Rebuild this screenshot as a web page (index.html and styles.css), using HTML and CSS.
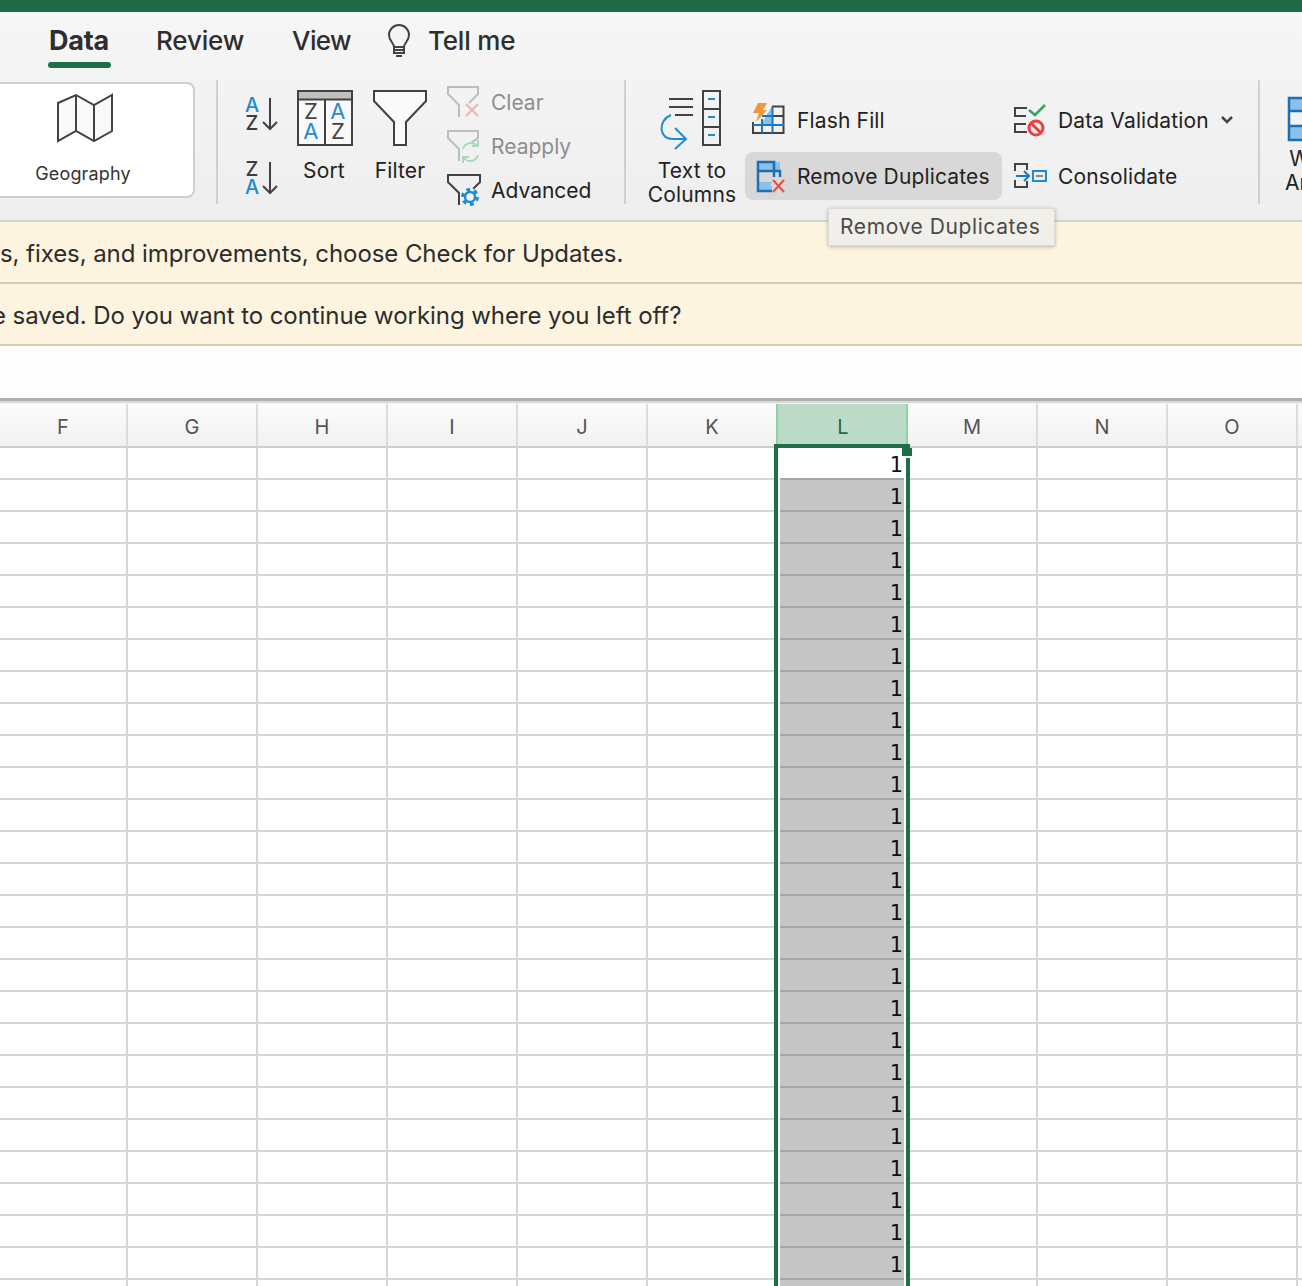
FILE: index.html
```html
<!DOCTYPE html>
<html lang="en">
<head>
  <meta charset="UTF-8">
  <title>Remove Duplicates</title>
  <link rel="stylesheet" href="styles.css">
</head>
<body>
<div class="titlebar"></div>
<div class="ribbon">
  <div class="tabs">
    <a class="tab tab-data active">Data</a>
    <a class="tab tab-review">Review</a>
    <a class="tab tab-view">View</a>
    <svg class="bulb" width="24" height="32" viewBox="0 0 24 32"><path class="dark-line" d="M7 23c0-4-5-6-5-12a10 10 0 0 1 20 0c0 6-5 8-5 12z"/><path class="dark-line" d="M7 23v6h10v-6M7 26h10M9 32h6"/></svg>
    <a class="tab tab-tell">Tell me</a>
  </div>
  <div class="tools">
    <div class="geo-card">
      <svg width="56" height="48" viewBox="0 0 56 48"><path class="dark-line fill-soft" d="M1 9 19 1 37 11 55 1V37L37 47 19 37 1 47ZM19 1V37M37 11V47"/></svg>
      <span>Geography</span>
    </div>
    <div class="sep sep-a"></div>
    <div class="sort-pair">
      <svg width="34" height="36" viewBox="0 0 34 36"><text class="blue-txt" x="0" y="15">A</text><text class="dark-txt" x="0.500" y="33">Z</text><path class="dark-line" d="M25 1V32M18 25l7 7 7-7"/></svg>
      <svg width="34" height="36" viewBox="0 0 34 36"><text class="dark-txt" x="0.500" y="15">Z</text><text class="blue-txt" x="0" y="33">A</text><path class="dark-line" d="M25 1V32M18 25l7 7 7-7"/></svg>
    </div>
    <div class="big big-sort">
      <svg width="56" height="56" viewBox="0 0 56 56">
        <rect class="dark-line fill-soft" x="1" y="1" width="54" height="54"/>
        <rect x="2" y="2" width="52" height="7" fill="#bfbfbb"/>
        <path class="dark-line" d="M1 9.500H55M28 9V55"/>
        <text class="big-letter" x="14" y="29">Z</text><text class="big-letter blue" x="14" y="49">A</text>
        <text class="big-letter blue" x="41" y="29">A</text><text class="big-letter" x="41" y="49">Z</text>
      </svg>
      <span>Sort</span>
    </div>
    <div class="big big-filter">
      <svg width="56" height="56" viewBox="0 0 56 56"><path class="dark-line fill-soft" d="M2 1H54V11L34 32V55H22V32L2 11Z"/></svg>
      <span>Filter</span>
    </div>
    <div class="filter-list">
      <div class="filter-row off">
        <svg width="34" height="34" viewBox="0 0 34 34"><path class="grey-line" d="M12 32V20L1 9V2H31V9L22 18"/><path class="x-soft" d="M19 19 31 31M31 19 19 31"/></svg>
        <span>Clear</span>
      </div>
      <div class="filter-row off">
        <svg width="34" height="34" viewBox="0 0 34 34"><path class="grey-line" d="M12 32V20L1 9V2H31V9L24 14"/><path class="green-soft" d="M16 20a8 8 0 0 1 14-3M31 26a8 8 0 0 1-14 3"/><path class="green-soft" d="M31 11v6h-6M16 34v-6h6"/></svg>
        <span>Reapply</span>
      </div>
      <div class="filter-row">
        <svg width="34" height="34" viewBox="0 0 34 34"><path class="dark-line" d="M12 32V20L1 9V2H33V9L26 16"/><circle cx="23" cy="24" r="9" fill="#f4f4f4"/><circle class="gear-teeth" cx="23" cy="24" r="7.500"/><circle class="gear-ring" cx="23" cy="24" r="5"/></svg>
        <span>Advanced</span>
      </div>
    </div>
    <div class="sep sep-b"></div>
    <div class="big big-text">
      <svg width="62" height="60" viewBox="0 0 62 60">
        <path class="dark-line" d="M9 9H33M9 17H33M15 25H33"/>
        <rect class="dark-line" x="43" y="1" width="17" height="54"/>
        <path class="dark-line" d="M43 19H60M43 37H60"/>
        <path class="blue-dash" d="M48 9h7M48 27h7M48 45h7"/>
        <path class="blue-line" d="M11 25C-2 30 -2 49 13 49H26M15 38 26 49 15 59"/>
      </svg>
      <span>Text to<br>Columns</span>
    </div>
    <div class="commands">
      <div class="cmd cmd-wide">
        <svg width="34" height="34" viewBox="0 0 34 34">
          <path d="M10 20 20 3V22H10Z" fill="#8cc0ec"/>
          <path class="dark-line" d="M20 3.500H31.500V30H1V19M20 13H32"/>
          <path class="blue-bar" d="M10 16V30M20.500 4V30M1 22H32M10 13H20"/>
          <path d="M6 0H15L11 7H15L4 19 7 10H1Z" fill="#f0973a"/>
        </svg>
        <span>Flash Fill</span>
      </div>
      <div class="cmd">
        <svg width="34" height="34" viewBox="0 0 34 34"><path class="dark-line" d="M14 5H2V13H13M13 21H2V29H14"/><path class="green-check" d="M16 7 22 12 32 2"/><circle class="red-ring" cx="23" cy="25" r="7"/><path class="red-ring" d="M18 20 28 30"/></svg>
        <span>Data Validation</span>
        <svg class="chev" width="14" height="10" viewBox="0 0 14 10"><path d="M2 2 7 7 12 2" fill="none" stroke="#444" stroke-width="2.500"/></svg>
      </div>
      <div class="cmd cmd-wide hovered">
        <svg width="34" height="34" viewBox="0 0 34 34">
          <rect x="6" y="3" width="22" height="9" fill="#8cc0ec"/>
          <rect x="6" y="23" width="14" height="9" fill="#8cc0ec"/>
          <path class="frame-blue" d="M22 18V3H6V32H20M6 12H28V18"/>
          <path d="M25 18 33 24 26 33 18 26Z" fill="#d8d8d8"/>
          <path class="x-red" d="M21 21 32 33M32 21 21 33"/>
        </svg>
        <span>Remove Duplicates</span>
      </div>
      <div class="cmd">
        <svg width="34" height="34" viewBox="0 0 34 34"><path class="dark-line" d="M14 11V5H2V12M2 21V28H14V22"/><path class="blue-bar" d="M3 17H15M11 12l5 5-5 5"/><rect class="frame-blue thin" x="20" y="12" width="13" height="10"/><path d="M23 17h7" stroke="#888" stroke-width="2"/></svg>
        <span>Consolidate</span>
      </div>
    </div>
    <div class="sep sep-c"></div>
    <div class="big big-what">
      <svg width="76" height="44" viewBox="0 0 76 44"><rect x="2" y="2" width="72" height="12" fill="#8cc0ec"/><rect x="2" y="29" width="72" height="13" fill="#8cc0ec"/><rect class="frame-blue" x="1" y="1" width="74" height="42"/><path class="frame-blue" d="M1 14H75M1 29H75"/></svg>
      <span>What-If<br>Analysis</span>
    </div>
  </div>
  <div class="tooltip">Remove Duplicates</div>
</div>

<div class="notice">s, fixes, and improvements, choose Check for Updates.</div>
<div class="notice notice-two">e saved. Do you want to continue working where you left off?</div>
<div class="formula-bar"></div>

<div class="sheet">
  <div class="col"><div class="col-head">F</div><div class="col-body"></div></div>
  <div class="col"><div class="col-head">G</div><div class="col-body"></div></div>
  <div class="col"><div class="col-head">H</div><div class="col-body"></div></div>
  <div class="col"><div class="col-head">I</div><div class="col-body"></div></div>
  <div class="col"><div class="col-head">J</div><div class="col-body"></div></div>
  <div class="col"><div class="col-head">K</div><div class="col-body"></div></div>
  <div class="col-l">
    <div class="col-l-head">L</div>
    <div class="sel">
      <div class="handle"></div>
      <div class="cell first">1</div>
      <div class="cell">1</div><div class="cell">1</div><div class="cell">1</div><div class="cell">1</div>
      <div class="cell">1</div><div class="cell">1</div><div class="cell">1</div><div class="cell">1</div>
      <div class="cell">1</div><div class="cell">1</div><div class="cell">1</div><div class="cell">1</div>
      <div class="cell">1</div><div class="cell">1</div><div class="cell">1</div><div class="cell">1</div>
      <div class="cell">1</div><div class="cell">1</div><div class="cell">1</div><div class="cell">1</div>
      <div class="cell">1</div><div class="cell">1</div><div class="cell">1</div><div class="cell">1</div>
      <div class="cell">1</div><div class="cell"></div>
    </div>
  </div>
  <div class="col"><div class="col-head">M</div><div class="col-body"></div></div>
  <div class="col"><div class="col-head">N</div><div class="col-body"></div></div>
  <div class="col"><div class="col-head">O</div><div class="col-body"></div></div>
  <div class="col"><div class="col-head"></div><div class="col-body"></div></div>
</div>
</body>
</html>
```

FILE: styles.css
```css
* {
  margin: 0;
  padding: 0;
  box-sizing: border-box;
}
html, body {
  width: 1302px;
  height: 1286px;
  overflow: hidden;
}
body {
  font-family: Inter, "Liberation Sans", sans-serif;
  color: #222;
  background: #fff;
}
svg {
  display: block;
  flex: none;
  overflow: visible;
}
.titlebar {
  height: 12px;
  background: #1e6b45;
}

/* ribbon */
.ribbon {
  position: relative;
  height: 210px;
  background: linear-gradient(#f6f6f6, #eeeeee);
  border-bottom: 2px solid #d2d2d2;
}
.tabs {
  display: flex;
  height: 56px;
  padding-left: 49px;
  align-items: center;
}
.tab {
  font-size: 26px;
  font-weight: 500;
  line-height: 58px;
  height: 56px;
  color: #2e2e2e;
  position: relative;
  letter-spacing: -0.2px;
}
.active {
  font-size: 27px;
  font-weight: 700;
}
.active::after {
  content: "";
  position: absolute;
  left: -1px;
  right: -2px;
  bottom: 0;
  height: 6px;
  border-radius: 3px;
  background: #1e6f48;
}
.tab-review { margin-left: 47px; }
.tab-view { margin-left: 48px; letter-spacing: -0.6px; }
.bulb { margin-left: 36px; }
.tab-tell { margin-left: 17px; }
.tools {
  display: flex;
  align-items: flex-start;
  height: 124px;
  margin-top: 12px;
}
.dark-line, .grey-line, .blue-line, .blue-bar, .blue-dash, .frame-blue, .x-soft, .x-red, .green-soft, .green-check, .red-ring {
  fill: none;
  stroke-width: 2;
}
.dark-line { stroke: #424242; }
.fill-soft { fill: #f9f9f9; }
.grey-line { stroke: #bdbdbd; }
.blue-line { stroke: #1e8bd2; }
.blue-bar { stroke: #1a78c2; }
.blue-dash { stroke: #1e8bd2; }
.frame-blue { stroke: #1a6fb5; stroke-width: 2.5; }
.frame-blue.thin { stroke: #1e8bd2; stroke-width: 2; }
.x-soft { stroke: #f2b3b0; }
.x-red { stroke: #ea4a46; }
.green-soft { stroke: #a6dcba; }
.green-check { stroke: #2aa85f; stroke-width: 2.5; }
.red-ring { stroke: #ea4040; stroke-width: 3; }
.gear-teeth {
  fill: none;
  stroke: #1e8bd2;
  stroke-width: 3;
  stroke-dasharray: 3.92 3.93;
}
.gear-ring {
  fill: #f4f4f4;
  stroke: #1e8bd2;
  stroke-width: 2.5;
}
.blue-txt, .dark-txt {
  font-size: 20px;
  font-weight: 500;
}
.blue-txt { fill: #1e8bd2; }
.dark-txt { fill: #3c3c3c; }
.big-letter {
  font-size: 22px;
  fill: #444;
  text-anchor: middle;
}
.big-letter.blue { fill: #1e8bd2; }

.geo-card {
  flex: none;
  width: 205px;
  height: 116px;
  margin-left: -10px;
  margin-top: 2px;
  padding: 10px 19px 0 0;
  background: #fff;
  border: 2px solid #cfcfcf;
  border-radius: 8px;
  display: flex;
  flex-direction: column;
  align-items: center;
  font-size: 18px;
  letter-spacing: 0.15px;
  color: #333;
}
.geo-card svg {
  margin-left: 4px;
}
.geo-card span {
  margin-top: 20px;
  line-height: 24px;
}
.sep {
  width: 2px;
  height: 124px;
  background: #cfcfcf;
  flex: none;
}
.sep-a { margin-left: 21px; }
.sep-b { margin-left: 33px; }
.sep-c { margin-left: 11px; }
.sort-pair {
  margin-left: 27px;
  padding-top: 17px;
  display: flex;
  flex-direction: column;
  gap: 28px;
}
.big {
  padding-top: 10px;
  display: flex;
  flex-direction: column;
  align-items: center;
  flex: none;
  font-size: 21px;
  letter-spacing: 0.15px;
  line-height: 24px;
  text-align: center;
  color: #222;
}
.big span {
  margin-top: 13px;
}
.big-sort { width: 56px; margin-left: 18px; }
.big-sort span { margin-left: -2px; }
.big-filter { width: 56px; margin-left: 19px; }
.filter-list {
  margin-left: 19px;
  width: 144px;
  flex: none;
}
.filter-row {
  display: flex;
  align-items: center;
  gap: 10px;
  height: 44px;
  font-size: 21px;
}
.filter-row span { padding-top: 1px; }
.off { color: #8e8e8e; }
.big-text { width: 88px; margin-left: 22px; }
.big-text svg { margin-left: -2px; }
.big-text span { margin-top: 9px; }
.commands {
  display: grid;
  grid-template-columns: 257px 234px;
  grid-template-rows: 48px 48px;
  gap: 8px 11px;
  margin-left: 9px;
  margin-top: 16px;
  flex: none;
}
.cmd {
  display: flex;
  align-items: center;
  gap: 11px;
  font-size: 21px;
  letter-spacing: 0.15px;
}
.cmd span { padding-top: 1px; }
.cmd-wide {
  padding-left: 7px;
  border-radius: 8px;
}
.hovered { background: #d8d8d8; }
.big-what { width: 80px; margin-left: 27px; }
.big-what svg { margin-left: -2px; margin-top: 7px; }
.big-what span { margin-top: 6px; white-space: nowrap; }
.tooltip {
  position: absolute;
  left: 828px;
  top: 196px;
  width: 227px;
  height: 38px;
  background: #f1efe9;
  border: 1px solid #dcdad4;
  box-shadow: 0 1px 4px rgba(0,0,0,.25);
  font-size: 21px;
  letter-spacing: 0.6px;
  line-height: 36px;
  padding-left: 11px;
  color: #4a4a4a;
  z-index: 5;
}

/* notices */
.notice {
  height: 62px;
  padding-top: 2px;
  background: #fdf4e0;
  border-bottom: 2px solid #d5cdbc;
  font-size: 24px;
  letter-spacing: -0.07px;
  line-height: 60px;
  color: #2c2c2c;
  white-space: nowrap;
}
.notice-two {
  text-indent: -8px;
}
.formula-bar {
  height: 58px;
  background: linear-gradient(#fdfdfd 52px, #b0b0b0 52px, #b0b0b0 55px, #d8d8d8 55px, #d8d8d8 57px, #f4f4f4 57px);
}

/* sheet */
.sheet {
  display: flex;
  height: 882px;
  overflow: hidden;
}
.col {
  flex: none;
  width: 130px;
}
.col:first-child {
  width: 128px;
}
.col-head {
  height: 44px;
  background: linear-gradient(#fcfcfc, #f1f1f1);
  border-right: 2px solid #dcdcdc;
  border-bottom: 2px solid #cccccc;
  font-size: 20px;
  line-height: 46px;
  text-align: center;
  color: #555;
}
.col-body {
  height: 838px;
  border-right: 2px solid #d6d6d6;
  background: repeating-linear-gradient(#fff 0, #fff 30px, #d6d6d6 30px, #d6d6d6 32px);
}
.col-l {
  flex: none;
  position: relative;
  z-index: 1;
  width: 136px;
  margin-left: -4px;
  margin-right: -2px;
}
.col-l-head {
  margin: 0 2px;
  height: 40px;
  background: #bbdbc8;
  border-left: 2px solid #8dd4a4;
  border-right: 2px solid #8dd4a4;
  font-size: 20px;
  line-height: 46px;
  text-align: center;
  text-indent: 2px;
  color: #1e6b45;
}
.sel {
  position: relative;
  height: 842px;
  background: #fff;
  border: 4px solid #1e6f48;
  border-bottom: 0;
  padding: 0 2px;
}
.handle {
  position: absolute;
  left: 124px;
  top: 0;
  width: 10px;
  height: 8px;
  background: #1e6f48;
  box-shadow: 0 2px 0 #fff;
}
.cell {
  height: 32px;
  background: #c6c6c6;
  border-bottom: 2px solid #a6a6a6;
  font-family: "DejaVu Sans", sans-serif;
  font-size: 21px;
  line-height: 35px;
  text-align: right;
  padding-right: 1px;
  color: #111;
}
.first {
  background: #fff;
}
```
